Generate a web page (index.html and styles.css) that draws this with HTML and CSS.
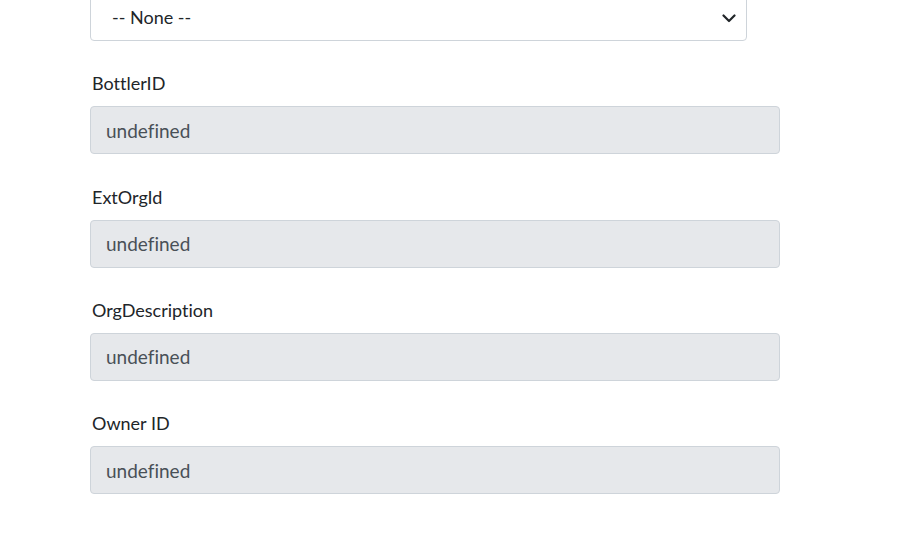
FILE: index.html
```html
<!DOCTYPE html>
<html>
<head>
<meta charset="utf-8">
<link rel="stylesheet" href="styles.css">
</head>
<body>
<div class="form">
  <div class="group">
    <div class="select">
      <span class="select-text">-- None --</span>
      <svg class="chev" width="14" height="10" viewBox="0 0 14 10"><path d="M1.5 2.5 L7 8 L12.5 2.5" fill="none" stroke="#212529" stroke-width="2.2" stroke-linecap="round" stroke-linejoin="round"/></svg>
    </div>
  </div>
  <div class="group">
    <div class="label">BottlerID</div>
    <div class="input">undefined</div>
  </div>
  <div class="group">
    <div class="label">ExtOrgId</div>
    <div class="input">undefined</div>
  </div>
  <div class="group">
    <div class="label">OrgDescription</div>
    <div class="input">undefined</div>
  </div>
  <div class="group">
    <div class="label">Owner ID</div>
    <div class="input">undefined</div>
  </div>
</div>
</body>
</html>
```

FILE: styles.css
```css
html, body {
  margin: 0;
  padding: 0;
  background: #ffffff;
}
body {
  font-family: "Lato", "Open Sans", sans-serif;
  font-variant-ligatures: none;
  color: #212529;
}
.form {
  margin-top: -7px;
  padding-left: 90px;
  display: flex;
  flex-direction: column;
}
.group {
  display: flex;
  flex-direction: column;
  margin-bottom: 29.33px;
}
.select {
  box-sizing: border-box;
  width: 657px;
  height: 48px;
  border: 1px solid #ced4da;
  border-radius: 4px;
  background: #fff;
  display: flex;
  align-items: center;
  justify-content: space-between;
  padding: 0 10px 0 21px;
  font-size: 18px;
  color: #212529;
}
.chev {
  margin-top: 1px;
}
.label {
  height: 27px;
  line-height: 27px;
  font-size: 18px;
  margin-bottom: 9px;
  padding-left: 2px;
  color: #212529;
}
.input {
  box-sizing: border-box;
  width: 690px;
  height: 48px;
  border: 1px solid #ced4da;
  border-radius: 4px;
  background: #e6e8eb;
  display: flex;
  align-items: center;
  padding-left: 15px;
  font-size: 19px;
  color: #495057;
}
```
